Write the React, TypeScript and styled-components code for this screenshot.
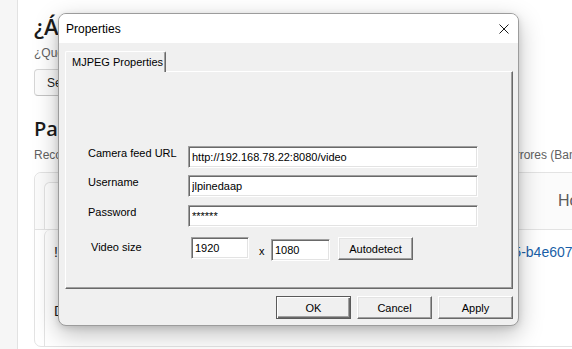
import React from "react";
import styled, { createGlobalStyle } from "styled-components";

const Global = createGlobalStyle`
  html, body { margin: 0; padding: 0; }
  body {
    width: 572px;
    height: 349px;
    overflow: hidden;
    background: #ffffff;
    font-family: "Liberation Sans", Arial, sans-serif;
  }
  #root { position: relative; width: 572px; height: 349px; overflow: hidden; }
`;

/* ---------- background application page ---------- */

const Page = styled.div`
  display: flex;
  width: 572px;
  height: 349px;
  background: #ffffff;
`;

const Rail = styled.aside`
  flex: 0 0 17px;
  background: #f6f6f6;
  border-right: 1px solid #e2e2e2;
`;

const Content = styled.main`
  flex: 1;
  min-width: 0;
  padding: 12px 0 0 16px;
  font-family: "Liberation Sans", Arial, sans-serif;
  color: #1b1b1b;
`;

const Title = styled.h1`
  margin: 0;
  font-family: "Open Sans", "Liberation Sans", sans-serif;
  font-weight: 600;
  font-size: 22px;
  line-height: 28px;
  white-space: nowrap;
`;

const Section = styled.h2`
  margin: 20px 0 0;
  font-family: "Open Sans", "Liberation Sans", sans-serif;
  font-weight: 600;
  font-size: 20px;
  line-height: 26px;
  white-space: nowrap;
`;

const Hint = styled.p<{ $mt: number }>`
  margin: ${(p) => p.$mt}px 0 0;
  font-size: 12px;
  line-height: 16px;
  color: #616161;
  white-space: nowrap;
`;

const Lead = styled.span`
  display: inline-block;
  width: 475px;
  overflow: hidden;
  vertical-align: top;
`;

const PageButton = styled.button`
  margin-top: 8px;
  height: 27px;
  padding: 0 12px;
  border: 1px solid #d6d6d6;
  border-bottom-color: #c4c4c4;
  border-radius: 4px;
  background: #fbfbfb;
  font-family: "Liberation Sans", Arial, sans-serif;
  font-size: 12px;
  color: #1b1b1b;
`;

const Card = styled.section`
  margin-top: 9px;
  width: 560px;
  border: 1px solid #e3e3e3;
  border-radius: 7px;
  background: #ffffff;
`;

const HeadRow = styled.div`
  display: grid;
  grid-template-columns: 69px 454px 1fr;
  height: 56px;
  border-bottom: 1px solid #e3e3e3;
  background: #fbfbfb;
  border-radius: 7px 7px 0 0;
`;

const SelectCell = styled.div`
  margin: 9px 0 0 9px;
  border: 1px solid #e3e3e3;
  border-bottom: none;
  border-radius: 6px 6px 0 0;
  background: #ffffff;
`;

const HeadCell = styled.div`
  display: flex;
  align-items: center;
  font-size: 16px;
  color: #5c5c5c;
  white-space: nowrap;
`;

const Rows = styled.div`
  margin-left: 9px;
  border-left: 1px solid #e3e3e3;
  border-top-left-radius: 6px;
`;

const DataRow = styled.div<{ $h: number; $pt: number }>`
  display: grid;
  grid-template-columns: 438px 1fr;
  height: ${(p) => p.$h}px;
  padding-top: ${(p) => p.$pt}px;
  box-sizing: border-box;
  font-size: 14px;
  line-height: 18px;
  white-space: nowrap;
`;

const Cell = styled.span<{ $link?: boolean }>`
  padding-left: ${(p) => (p.$link ? 0 : 9)}px;
  color: ${(p) => (p.$link ? "#1a5fa8" : "#1b1b1b")};
`;

/* ---------- Properties dialog (a window over the page) ---------- */

const Dialog = styled.div`
  position: absolute;
  left: 58px;
  top: 13px;
  width: 461px;
  height: 313px;
  box-sizing: border-box;
  display: flex;
  flex-direction: column;
  border: 1px solid #9c9c9c;
  border-radius: 8px;
  background: #f0f0f0;
  box-shadow: 0 8px 24px rgba(0, 0, 0, 0.26), 0 2px 6px rgba(0, 0, 0, 0.12);
  font-family: "Liberation Sans", Arial, sans-serif;
  font-size: 11px;
  color: #000;
`;

const TitleBar = styled.div`
  flex: 0 0 29px;
  display: flex;
  align-items: center;
  justify-content: space-between;
  padding: 0 9px 0 7px;
  background: #ffffff;
  border-radius: 7px 7px 0 0;
  font-size: 12px;
`;

const CloseButton = styled.span`
  display: flex;
  width: 10px;
  height: 10px;
`;

const Body = styled.div`
  flex: 1;
  display: flex;
  flex-direction: column;
  padding: 8px 5px 6px 6px;
  border-radius: 0 0 7px 7px;
`;

const TabStrip = styled.div`
  display: flex;
  height: 20px;
`;

const Tab = styled.div`
  position: relative;
  z-index: 1;
  display: flex;
  align-items: center;
  width: 101px;
  height: 21px;
  box-sizing: border-box;
  padding-left: 6px;
  background: #f0f0f0;
  border-top: 1px solid #ffffff;
  border-left: 1px solid #ffffff;
  border-right: 1px solid #696969;
  box-shadow: inset -1px 0 #a0a0a0;
  border-radius: 2px 2px 0 0;
`;

const Panel = styled.div`
  height: 218px;
  box-sizing: border-box;
  padding: 74px 0 0 22px;
  border: 1px solid;
  border-color: #ffffff #696969 #696969 #ffffff;
  box-shadow: inset -1px -1px #a0a0a0;
`;

const Row = styled.div<{ $mt: number; $indent?: number }>`
  display: flex;
  align-items: flex-start;
  margin-top: ${(p) => p.$mt}px;
  padding-left: ${(p) => p.$indent ?? 0}px;
`;

const Label = styled.label<{ $pt: number }>`
  flex: 0 0 100px;
  padding-top: ${(p) => p.$pt}px;
  line-height: 13px;
  white-space: nowrap;
`;

const Field = styled.input<{ $w: number; $mt?: number }>`
  width: ${(p) => p.$w}px;
  height: 22px;
  box-sizing: border-box;
  margin: ${(p) => p.$mt ?? 0}px 0 0;
  padding: 0 0 0 3px;
  border: 1px solid;
  border-color: #a0a0a0 #ffffff #ffffff #a0a0a0;
  box-shadow: inset 1px 1px #696969, inset -1px -1px #e3e3e3;
  background: #ffffff;
  font-family: "Liberation Sans", Arial, sans-serif;
  font-size: 11px;
  color: #000;
  outline: none;
`;

const Times = styled.span`
  flex: 0 0 22px;
  box-sizing: border-box;
  padding: 8px 0 0 10px;
  line-height: 13px;
`;

const Button = styled.button<{ $default?: boolean; $ml?: number }>`
  width: 75px;
  height: 23px;
  margin-left: ${(p) => p.$ml ?? 0}px;
  padding: 0;
  box-sizing: border-box;
  background: #f0f0f0;
  border: 1px solid;
  border-color: ${(p) =>
    p.$default ? "#5a5a5a" : "#ffffff #696969 #696969 #ffffff"};
  box-shadow: ${(p) =>
    p.$default
      ? "inset 1px 1px #ffffff, inset -1px -1px #696969, inset -2px -2px #a0a0a0"
      : "inset -1px -1px #a0a0a0, inset 1px 1px #e3e3e3"};
  font-family: "Liberation Sans", Arial, sans-serif;
  font-size: 11px;
  color: #000;
`;

const ButtonRow = styled.div`
  display: flex;
  justify-content: flex-end;
  gap: 6px;
  margin-top: 7px;
`;

const CloseIcon = () => (
  <svg width="10" height="10" viewBox="0 0 10 10">
    <path d="M0.5 0.5 L9.5 9.5 M9.5 0.5 L0.5 9.5" stroke="#1a1a1a" strokeWidth="1" fill="none" />
  </svg>
);

export default function App() {
  return (
    <>
      <Global />
      <Page>
        <Rail />
        <Content>
          <Title>¿Ámbito del análisis?</Title>
          <Hint $mt={5}>¿Qué elementos desea analizar?</Hint>
          <PageButton>Seleccionar</PageButton>
          <Section>Pasos siguientes</Section>
          <Hint $mt={5}>
            <Lead>Recomendaciones para revisar el registro de eventos y corregir los</Lead>
            errores (Banco de datos)
          </Hint>
          <Card>
            <HeadRow>
              <SelectCell />
              <HeadCell>Identificador</HeadCell>
              <HeadCell>Hora</HeadCell>
            </HeadRow>
            <Rows>
              <DataRow $h={56} $pt={13}>
                <Cell>!Importante: conexión de cámara</Cell>
                <Cell $link>4a9c5-b4e607a2d1</Cell>
              </DataRow>
              <DataRow $h={60} $pt={16}>
                <Cell>Detalles del dispositivo</Cell>
                <Cell $link />
              </DataRow>
            </Rows>
          </Card>
        </Content>
      </Page>

      <Dialog role="dialog" aria-label="Properties">
        <TitleBar>
          <span>Properties</span>
          <CloseButton>
            <CloseIcon />
          </CloseButton>
        </TitleBar>
        <Body>
          <TabStrip>
            <Tab>MJPEG Properties</Tab>
          </TabStrip>
          <Panel>
            <Row $mt={0}>
              <Label $pt={1}>Camera feed URL</Label>
              <Field $w={290} readOnly value="http://192.168.78.22:8080/video" />
            </Row>
            <Row $mt={7}>
              <Label $pt={1}>Username</Label>
              <Field $w={290} readOnly value="jlpinedaap" />
            </Row>
            <Row $mt={8}>
              <Label $pt={1}>Password</Label>
              <Field $w={290} readOnly value="******" />
            </Row>
            <Row $mt={10} $indent={3}>
              <Label $pt={4}>Video size</Label>
              <Field $w={58} readOnly value="1920" />
              <Times>x</Times>
              <Field $w={59} $mt={2} readOnly value="1080" />
              <Button $ml={8}>Autodetect</Button>
            </Row>
          </Panel>
          <ButtonRow>
            <Button $default>OK</Button>
            <Button>Cancel</Button>
            <Button>Apply</Button>
          </ButtonRow>
        </Body>
      </Dialog>
    </>
  );
}
